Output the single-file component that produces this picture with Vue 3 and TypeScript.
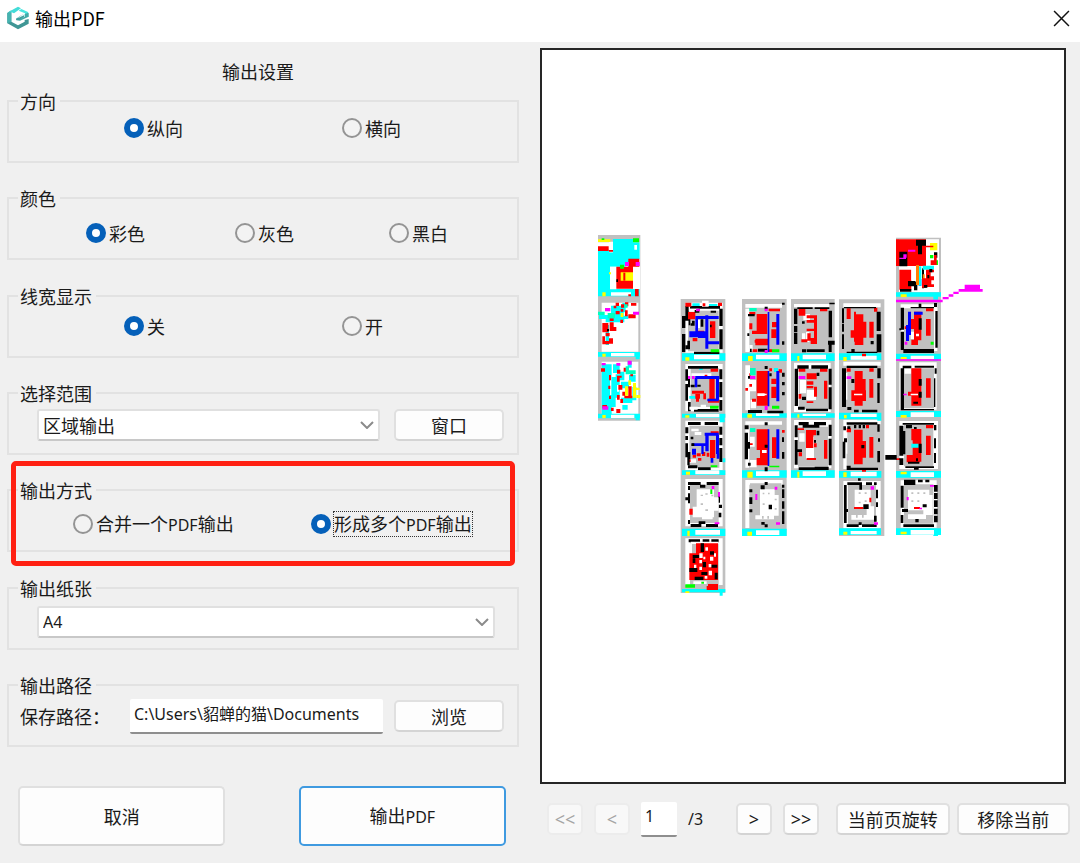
<script setup lang="ts">
import { ref } from 'vue'

type Layer = [color: string, boxes: string]
interface Sheet { x: number; y: number; layers: Layer[] }

const GREY = '#c0c0c0', WHITE = '#ffffff', CYAN = '#00ffff', RED = '#ff0000'
const BLACK = '#000000', BLUE = '#0000ff', YELLOW = '#ffff00', GREEN = '#00ff00'
const PINK = '#ff00ff', TEAL = '#00ffbf', ORANGE = '#ff7f00'

const orientation = ref('portrait')
const color = ref('color')
const lineWidth = ref('off')
const range = ref('area')
const mode = ref('multiple')
const paper = ref('A4')
const savePath = ref('C:\\Users\\貂蝉的猫\\Documents')
const page = ref('1')

// Boxes are "x y w h" in thirds of a unit, relative to the column's origin.
const toPath = (boxes: string): string =>
  boxes.split(',').map((b) => {
    const [x, y, w, h] = b.trim().split(' ').map(Number)
    return `M${x} ${y}h${w}v${h}h${-w}z`
  }).join('')

const sheets: Sheet[] = [
  { x: 590, y: 225, layers: [
    [GREY, '27 30 127 557'],
    [WHITE, '27 52 126 160, 38 233 110 147, 38 410 110 158'],
    [CYAN, '27 74 36 138, 72 42 60 82, 56 82 96 20, 63 98 46 27, 110 52 42 48, 27 192 125 22, 27 381 126 14, 27 566 126 14, 140 381 12 22, 140 566 12 20, 66 242 40 50, 30 270 52 12, 100 234 10 30, 90 270 28 12, 50 276 24 16, 38 418 30 148, 72 418 20 26, 80 448 12 70, 66 456 14 90, 92 440 14 26, 96 470 24 20, 96 518 34 16, 100 540 16 14, 116 408 12 20, 120 450 20 20, 130 486 12 40, 50 300 10 60'],
    [WHITE, '60 50 12 32, 63 125 19 68, 133 126 19 64, 66 202 60 10, 66 384 70 10, 66 569 70 10, 136 60 8 14, 63 450 4 60, 84 480 6 20, 104 262 5 10'],
    [RED, '27 64 32 14, 60 75 12 5, 118 101 33 24, 82 125 50 66, 138 192 11 22, 118 208 8 6, 80 233 10 10, 96 238 10 10, 108 232 10 12, 126 234 16 8, 74 242 8 8, 80 258 12 10, 95 252 8 8, 108 256 8 18, 118 268 22 12, 94 284 8 10, 62 280 12 8, 40 294 18 28, 62 292 12 26, 72 306 10 12, 50 324 12 10, 40 334 8 24, 60 340 12 16, 48 348 12 10, 36 430 12 10, 60 450 6 16, 84 434 10 12, 104 428 10 12, 84 458 8 12, 88 480 12 14, 100 500 10 12, 118 484 10 28, 106 512 24 8, 84 510 8 14, 94 522 8 12, 58 482 6 10, 60 512 6 10, 40 540 14 10, 66 548 8 10, 82 552 12 12, 124 446 8 8, 84 452 14 6'],
    [YELLOW, '27 43 37 8, 95 142 37 25, 60 142 6 6, 40 202 10 12, 95 264 8 12, 40 386 10 9, 40 570 10 9, 118 466 8 14, 108 484 9 28, 132 474 9 44, 140 488 12 7, 142 510 12 9'],
    [GREEN, '132 40 18 12, 93 119 12 12, 38 40 8 5'],
    [TEAL, '27 260 20 10, 56 264 22 16, 106 238 10 10, 110 424 10 24, 112 436 28 12'],
    [PINK, '108 111 12 12, 140 111 12 12, 48 249 16 10, 132 260 18 9, 116 407 12 12, 38 414 12 7, 82 414 12 8, 40 544 18 10'],
    [RED, '103 143 6 24'], [BLACK, '82 163 5 8, 54 312 6 7'],
  ] },
  { x: 675, y: 290, layers: [
    [GREY, '20 27 134 882'],
    [WHITE, '34 38 112 150, 34 222 112 142, 34 392 112 148, 34 567 112 142, 34 745 112 140'],
    [GREY, '42 62 92 122, 50 235 86 116, 46 407 90 126, 48 585 86 114, 48 755 86 130'],
    [CYAN, '24 190 130 22, 24 371 130 12, 24 541 130 14, 24 716 130 22, 24 897 130 10, 137 371 15 26, 137 897 9 20, 55 40 22 14, 105 42 25 12, 24 148 8 12, 76 228 10 12, 46 318 26 8, 146 505 8 12'],
    [BLACK, '34 48 10 44, 24 78 10 36, 24 132 10 54, 48 48 90 8, 136 56 10 52, 136 118 10 60, 60 185 76 7, 44 66 5 40, 42 228 90 8, 34 238 8 34, 34 282 8 50, 42 264 6 28, 42 336 8 28, 60 357 74 8, 136 238 9 30, 136 276 9 46, 136 330 9 32, 42 396 38 9, 92 396 40 9, 34 412 9 18, 34 438 8 12, 34 460 8 42, 42 486 7 22, 136 410 9 24, 136 444 9 22, 136 474 9 42, 42 526 28 9, 72 532 38 9, 42 576 38 9, 98 576 36 9, 78 584 16 9, 42 588 6 12, 42 610 6 30, 34 622 10 9, 42 690 6 12, 50 702 32 9, 96 702 36 9, 74 694 20 8, 132 610 6 28, 134 644 10 10, 134 668 8 14, 44 748 34 9, 86 748 20 9, 112 748 22 9, 100 640 10 18'],
    [WHITE, '46 56 28 9, 84 32 20 18, 64 90 14 24, 60 194 76 14, 66 372 70 10, 64 541 72 12, 64 720 74 14, 52 250 60 8, 46 350 25 9, 80 344 16 10, 62 426 20 9, 52 416 22 8, 46 508 20 10, 68 598 52 84, 56 650 28 32, 116 622 18 40, 84 674 32 14, 50 755 84 7, 46 760 8 82, 58 874 40 8'],
    [RED, '34 38 18 12, 42 66 22 22, 86 40 8 9, 108 94 16 50, 68 122 22 10, 56 144 14 10, 132 38 12 10, 110 236 22 9, 92 254 8 8, 106 266 16 66, 54 302 36 9, 64 312 14 14, 66 326 9 9, 88 310 8 18, 102 326 34 12, 110 424 24 10, 108 450 16 54, 56 495 10 8, 68 490 12 9, 84 486 10 12, 98 488 8 12, 72 504 10 8, 44 508 6 8, 46 656 10 18, 66 760 66 110, 46 790 22 80, 102 882 30 18, 98 888 6 12'],
    [BLUE, '94 76 9 100, 64 78 70 9, 64 84 8 50, 46 124 48 18, 102 154 34 9, 72 136 26 8, 64 258 72 9, 62 264 8 28, 126 264 9 66, 100 326 34 8, 92 428 42 9, 94 434 10 50, 54 460 44 8, 126 434 9 58, 54 476 12 18, 110 504 8 14, 82 466 7 26, 128 490 8 16'],
    [BLACK, '80 88 8 22, 54 92 8 12, 62 60 14 8, 40 152 8 14, 110 62 16 6, 108 104 5 8, 50 100 12 7, 34 166 14 12, 50 284 12 8, 70 284 10 6, 52 460 9 8, 40 500 7 26, 50 440 8 8, 80 760 10 26, 108 784 12 10, 56 795 20 9, 86 816 10 16, 112 824 18 9, 46 834 24 12, 82 846 18 9, 122 848 9 20, 62 860 26 10, 56 805 8 14'],
    [WHITE, '76 790 10 14, 94 772 8 10, 108 800 10 12, 76 810 8 10, 104 822 8 10, 76 830 8 10, 104 842 10 14, 60 824 7 10, 92 858 8 8, 120 790 6 10, 88 800 6 8'],
    [GREY, '94 610 7 4, 80 640 7 5, 80 614 7 4, 94 658 8 5, 112 614 6 5'],
    [GREEN, '110 178 26 9, 108 347 26 9, 110 526 20 6, 109 598 6 14, 34 883 29 10, 82 875 8 6'],
    [YELLOW, '34 202 12 10, 34 376 12 7, 36 545 12 9, 40 722 7 16, 34 904 12 5'],
    [PINK, '66 56 12 8, 42 258 7 9, 54 258 8 9, 113 588 8 10, 132 606 6 14, 122 697 14 6'],
  ] },
  { x: 735, y: 290, layers: [
    [GREY, '24 27 134 711, 171 27 131 536'],
    [WHITE, '34 42 110 11, 34 56 12 130, 34 226 14 135, 34 394 110 10, 34 405 12 128, 34 570 112 14, 34 580 12 134, 180 42 106 10, 180 218 110 148, 180 390 112 145'],
    [GREY, '48 62 94 116, 48 235 94 124, 48 405 94 132, 48 580 94 122, 192 58 92 122, 194 236 90 122, 192 410 90 120'],
    [CYAN, '24 190 134 23, 24 370 134 13, 24 541 134 22, 24 716 134 22, 171 190 131 23, 171 370 131 13, 171 541 131 22, 120 234 12 12'],
    [WHITE, '66 194 70 14, 66 370 70 8, 66 544 70 14, 66 721 70 14, 206 194 70 14, 206 371 70 7, 206 544 70 14, 46 165 10 18, 48 270 18 34, 50 330 16 25, 48 440 14 30, 48 510 20 22, 78 598 44 78, 100 615 34 62, 64 676 56 12, 208 72 20 18, 204 130 10 24, 216 126 10 30, 198 270 18 40, 218 300 28 30, 216 440 24 66, 196 430 16 25'],
    [RED, '68 72 32 60, 54 122 46 10, 46 66 18 8, 46 100 9 18, 104 56 34 8, 114 96 16 16, 112 118 16 26, 64 146 38 20, 62 150 16 8, 56 178 14 8, 104 178 10 8, 68 243 34 104, 112 266 16 16, 112 290 16 34, 34 294 8 8, 46 282 8 8, 54 326 12 9, 106 235 8 9, 134 238 10 10, 46 250 4 8, 68 418 34 62, 78 476 24 50, 114 442 14 62, 68 504 18 22, 48 460 8 5, 144 420 8 8, 194 55 20 22, 258 55 22 9, 218 76 26 9, 240 76 9 86, 218 90 22 8, 218 116 24 7, 220 130 10 22, 230 144 18 18, 202 148 18 9, 194 235 20 10, 258 235 22 10, 218 250 30 18, 218 274 20 10, 218 288 20 7, 240 290 9 30, 270 272 10 54, 194 312 8 14, 218 334 20 5, 190 415 20 5, 216 420 30 16, 216 436 22 38, 240 460 8 12, 270 450 10 56, 194 487 10 12, 218 504 28 6'],
    [BLUE, '101 66 5 120, 127 72 9 92, 101 243 5 106, 127 243 9 91, 101 418 5 110, 127 418 9 88'],
    [BLACK, '92 50 9 8, 144 38 8 6, 42 72 20 7, 144 154 7 10, 40 130 6 8, 48 176 5 10, 72 176 28 9, 92 228 9 9, 106 250 7 9, 144 248 8 12, 144 276 8 10, 144 306 8 10, 42 360 42 9, 100 362 48 8, 42 258 7 8, 92 397 9 9, 32 406 12 12, 32 428 10 80, 42 456 6 20, 92 464 9 9, 92 532 9 12, 42 518 8 9, 144 442 6 14, 144 486 7 20, 92 576 9 9, 80 586 12 12, 46 598 9 9, 46 622 9 20, 46 658 9 9, 104 644 10 14, 144 584 7 9, 144 598 7 26, 144 634 7 22, 144 664 7 38, 82 696 10 8, 92 703 9 9, 180 56 10 46, 180 108 10 18, 180 128 10 34, 190 52 46 5, 242 52 44 5, 284 62 10 80, 286 38 16 5, 282 152 20 12, 284 160 9 26, 204 178 12 9, 218 178 54 8, 190 226 34 10, 232 226 50 10, 182 236 10 112, 192 350 20 9, 216 356 66 8, 284 236 9 48, 284 292 9 66, 204 320 12 10, 248 248 8 10, 194 396 30 10, 240 396 36 10, 182 406 9 36, 182 450 9 74, 284 404 9 34, 284 446 9 80, 206 404 50 9, 194 532 48 8, 242 530 42 10, 190 478 14 8, 248 422 8 14, 204 94 8 7, 240 450 6 8'],
    [TEAL, '46 54 22 10, 48 234 17 22, 48 414 16 12'],
    [GREEN, '114 178 22 9, 114 347 22 9, 106 527 30 5'],
    [YELLOW, '42 198 14 15, 40 373 14 10, 40 545 16 18, 40 725 14 12, 190 198 6 15, 190 373 6 10, 190 545 6 18'],
    [PINK, '92 56 9 8, 92 180 9 9, 48 258 16 9, 92 348 9 12, 194 258 20 9, 64 612 6 18, 122 590 8 9, 126 697 12 7'],
    [WHITE, '70 310 22 8, 84 311 14 5, 84 480 14 9'],
    [GREY, '86 608 5 5, 102 608 5 5, 122 626 6 5, 86 640 6 5, 122 654 6 5, 84 678 5 8, 100 678 5 8'],
  ] },
  { x: 835, y: 225, layers: [
    [GREY, '15 223 136 710, 186 38 135 892'],
    [WHITE, '28 235 112 12, 28 410 112 12, 28 584 112 14, 28 598 12 134, 28 768 112 142, 195 43 120 158, 200 238 110 140, 196 412 112 142, 196 588 116 144, 200 766 108 142'],
    [GREY, '38 250 92 130, 38 430 92 122, 38 602 92 124, 42 780 84 118, 210 250 90 122, 210 430 90 120, 210 600 88 124, 210 778 88 118'],
    [CYAN, '15 385 127 20, 15 563 126 20, 15 738 127 20, 15 910 126 20, 130 563 12 24, 130 738 12 20, 186 202 135 13, 186 386 135 16, 186 558 135 18, 186 738 135 20, 186 910 135 20, 298 202 14 22, 298 386 14 21, 298 910 14 23'],
    [WHITE, '50 392 78 12, 50 566 78 10, 50 740 78 14, 50 918 78 10, 230 392 70 10, 230 562 70 14, 230 742 70 14, 230 915 70 14, 30 444 10 80, 30 600 10 86, 62 794 48 56, 52 870 68 14, 98 844 22 32, 222 794 64 62, 268 810 28 60, 222 868 54 14, 230 320 28 22, 302 250 8 20, 304 690 8 40, 212 430 20 16'],
    [RED, '186 43 90 80, 196 134 36 60, 38 250 12 32, 120 248 10 12, 60 260 6 90, 66 268 22 92, 50 316 46 22, 88 290 9 48, 106 290 13 48, 62 340 14 20, 84 386 12 8, 38 430 12 10, 106 430 13 10, 62 438 24 104, 52 496 44 32, 86 462 9 60, 106 462 12 56, 60 614 26 104, 38 610 13 12, 60 648 36 50, 96 600 9 10, 106 636 12 62, 84 734 12 6, 60 846 28 6, 106 818 6 14, 276 250 22 9, 240 260 22 86, 230 282 10 30, 276 282 14 50, 232 344 20 16, 212 304 10 8, 232 430 30 112, 276 460 14 58, 222 500 26 12, 276 600 22 10, 232 612 30 34, 236 640 26 70, 218 690 40 22, 276 632 14 58, 186 700 12 5, 240 846 18 6'],
    [BLACK, '24 250 6 44, 24 296 6 24, 24 328 6 44, 30 246 96 4, 128 260 12 58, 128 328 14 54, 38 380 92 4, 52 372 10 10, 110 348 9 10, 24 430 12 116, 38 422 92 7, 130 430 10 30, 130 474 7 60, 40 546 12 9, 84 554 46 8, 60 554 14 8, 38 592 92 7, 130 598 7 22, 132 640 6 10, 130 678 8 34, 26 650 8 50, 30 640 9 12, 28 604 8 12, 40 604 9 8, 60 600 7 10, 74 600 7 10, 86 600 7 10, 52 462 9 12, 82 660 9 10, 38 728 94 7, 38 722 12 7, 72 760 8 7, 40 772 44 8, 76 780 8 14, 96 772 18 8, 120 772 8 8, 30 780 8 114, 34 852 8 9, 38 898 36 8, 84 898 44 8, 74 892 9 8, 126 794 6 26, 126 832 6 14, 120 872 8 18, 88 838 16 14, 154 690 34 14, 196 80 24 44, 246 44 30 18, 252 60 12 28, 290 54 10 10, 300 82 10 16, 198 192 34 8, 222 168 22 16, 240 170 10 26, 264 130 6 60, 200 248 10 66, 200 320 10 56, 254 236 8 14, 230 246 70 4, 300 234 9 12, 304 258 7 110, 208 372 92 12, 196 310 6 6, 200 430 10 126, 206 422 26 8, 242 422 58 6, 210 552 90 4, 302 430 6 16, 300 460 4 86, 196 602 12 90, 196 700 12 20, 208 618 6 70, 216 600 18 10, 240 606 8 6, 206 594 94 5, 300 600 7 16, 300 640 6 30, 300 684 6 30, 214 724 86 5, 222 710 34 6, 240 724 14 10, 210 764 34 16, 252 764 14 8, 274 764 12 8, 200 782 9 66, 204 852 18 9, 200 870 8 24, 208 898 92 8, 244 882 10 10, 300 780 11 112, 266 838 12 9'],
    [WHITE, '300 800 11 4, 300 822 11 4, 300 846 11 5, 300 868 11 4'],
    [BLUE, '222 260 9 70, 216 300 9 48, 240 260 26 9, 254 162 8 20'],
    [CYAN, '254 124 8 58, 266 122 34 12, 232 656 22 12'],
    [ORANGE, '246 120 9 60, 266 148 6 34'],
    [RED, '276 134 24 52, 264 160 14 28'],
    [WHITE, '232 130 14 36, 290 142 10 12, 292 166 10 12, 232 322 8 8, 246 326 9 8, 60 506 25 5, 230 506 22 5'],
    [GREY, '74 802 6 5, 92 802 6 5, 74 830 6 5, 92 826 6 5, 232 802 6 5, 250 802 6 5, 268 802 6 5, 232 826 6 5, 250 826 6 5, 66 870 5 8, 84 870 5 8'],
    [BLACK, '254 280 9 34, 254 462 9 20, 254 500 9 18, 238 530 14 6, 254 656 9 28, 246 700 6 9, 286 132 9 10, 280 150 6 10, 270 180 10 8'],
    [YELLOW, '288 54 22 22, 200 208 18 8, 28 396 10 12, 200 396 18 6, 30 570 8 10, 200 570 18 8, 28 742 10 14, 200 740 18 8, 28 920 12 9, 200 920 18 8'],
    [GREEN, '288 90 10 10, 304 106 8 14, 290 350 9 9'],
    [RED, '300 90 8 30, 290 106 10 14, 276 62 22 5'],
    [PINK, '186 224 140 8, 326 216 18 7, 344 208 14 7, 358 200 16 7, 374 192 72 8, 392 179 46 14, 186 403 135 4, 222 74 22 6, 208 88 10 10, 196 98 20 4, 38 454 14 8, 110 784 10 10, 120 892 12 7, 212 350 8 9, 208 506 10 5, 218 816 6 10, 256 848 8 5, 288 780 12 5'],
  ] },
]
</script>

<template>
  <div class="dialog">
    <header class="titlebar">
      <svg class="logo" viewBox="0 0 66 70" aria-hidden="true">
        <path d="M1 20 13 12V46L33 57 53 46V41L65 38V52L33 69 1 51Z" fill="#3f9695" />
        <path d="M1 20 13 13V46L1 51Z" fill="#46b3b0" />
        <path d="M3 18 33 1 42 6 21 21 14 18Z" fill="#42dcd8" />
        <path d="M43 8 63 17 64 32 54 32V21L35 13Z" fill="#48e6e0" />
        <path d="M27 37 44 26 65 19V31L39 43 28 42Z" fill="#43aaa8" />
        <path d="M44 26 53 21V31L38 38 32 36Z" fill="#efffff" />
        <path d="M27 38 51 27V32L37 41 29 41Z" fill="#3f9f9e" />
      </svg>
      <h1>输出PDF</h1>
      <button class="close" type="button" aria-label="关闭">
        <svg viewBox="0 0 16 16" aria-hidden="true"><path d="M1 1 15 15M15 1 1 15" /></svg>
      </button>
    </header>

    <main class="body">
      <form class="settings" @submit.prevent>
        <h2>输出设置</h2>
        <div class="groups">
          <fieldset>
            <legend>方向</legend>
            <div class="row two high">
              <label><input v-model="orientation" type="radio" name="orientation" value="portrait" />纵向</label>
              <label><input v-model="orientation" type="radio" name="orientation" value="landscape" />横向</label>
            </div>
          </fieldset>
          <fieldset>
            <legend>颜色</legend>
            <div class="row three low">
              <label><input v-model="color" type="radio" name="color" value="color" />彩色</label>
              <label><input v-model="color" type="radio" name="color" value="grey" />灰色</label>
              <label><input v-model="color" type="radio" name="color" value="mono" />黑白</label>
            </div>
          </fieldset>
          <fieldset>
            <legend>线宽显示</legend>
            <div class="row two">
              <label><input v-model="lineWidth" type="radio" name="width" value="off" />关</label>
              <label><input v-model="lineWidth" type="radio" name="width" value="on" />开</label>
            </div>
          </fieldset>
          <fieldset>
            <legend>选择范围</legend>
            <div class="fields">
              <span class="select">
                <select v-model="range" aria-label="选择范围"><option value="area">区域输出</option></select>
                <svg viewBox="0 0 14 8" aria-hidden="true"><path d="M1 1 7 7 13 1" /></svg>
              </span>
              <button class="side" type="button">窗口</button>
            </div>
          </fieldset>
          <div class="marked">
            <fieldset>
              <legend>输出方式</legend>
              <div class="row modes">
                <label><input v-model="mode" type="radio" name="mode" value="single" /><span>合并一个<span class="abbr">PDF</span>输出</span></label>
                <label><input v-model="mode" type="radio" name="mode" value="multiple" /><span class="focus">形成多个<span class="abbr">PDF</span>输出</span></label>
              </div>
            </fieldset>
          </div>
          <fieldset>
            <legend>输出纸张</legend>
            <div class="fields paper">
              <span class="select latin">
                <select v-model="paper" aria-label="输出纸张"><option>A4</option></select>
                <svg viewBox="0 0 14 8" aria-hidden="true"><path d="M1 1 7 7 13 1" /></svg>
              </span>
            </div>
          </fieldset>
          <fieldset>
            <legend>输出路径</legend>
            <div class="fields path">
              <label for="save-path">保存路径：</label>
              <input id="save-path" v-model="savePath" type="text" />
              <button class="side" type="button">浏览</button>
            </div>
          </fieldset>
        </div>
        <div class="actions">
          <button type="button">取消</button>
          <button class="primary" type="submit">输出<span class="abbr">PDF</span></button>
        </div>
      </form>

      <section class="preview">
        <div class="canvas">
          <svg viewBox="543 50 522 732" role="img" aria-label="图纸预览">
            <g v-for="s in sheets" :key="s.x" :transform="`translate(${s.x} ${s.y}) scale(${1 / 3})`">
              <path v-for="([fill, boxes], i) in s.layers" :key="i" :fill="fill" :d="toPath(boxes)" />
            </g>
          </svg>
        </div>
        <nav class="pager" aria-label="翻页">
          <button class="step" type="button" disabled>&lt;&lt;</button>
          <button class="step" type="button" disabled>&lt;</button>
          <input v-model="page" type="text" aria-label="页码" />
          <span class="total">/3</span>
          <button class="step" type="button">&gt;</button>
          <button class="step" type="button">&gt;&gt;</button>
          <button class="wide first" type="button">当前页旋转</button>
          <button class="wide" type="button">移除当前</button>
        </nav>
      </section>
    </main>
  </div>
</template>

<style>
body { margin: 0; background: #f0f0f0; }
</style>

<style scoped>
.dialog {
  display: flex;
  flex-direction: column;
  min-height: 100vh;
  color: #1a1a1a;
  font: 18px/24px "Noto Sans CJK SC", sans-serif;
}
.dialog *, .dialog { box-sizing: border-box; }
button, input, select { font: inherit; color: inherit; margin: 0; }
h1, h2 { margin: 0; font-size: 18px; font-weight: 400; }
.abbr { font-family: "Noto Sans", sans-serif; font-size: 16px; }

.titlebar {
  display: flex;
  align-items: center;
  height: 42px;
  padding: 0 10px 6px 7px;
  background: #fff;
}
.titlebar h1 { flex: 1; padding-left: 6px; color: #000; }
.logo { width: 22px; height: 24px; }
.close { display: flex; padding: 0; border: 0; background: none; }
.close svg { width: 17px; height: 17px; fill: none; stroke: #111; stroke-width: 1.4; }

.body {
  flex: 1;
  display: grid;
  grid-template-columns: minmax(0, 512fr) minmax(0, 530fr);
  column-gap: 21px;
  padding: 6px 10px 17px 7px;
  background: #f0f0f0;
}
.settings { display: flex; flex-direction: column; }
.settings h2 { padding: 11px 10px 0 0; text-align: center; }
.groups { flex: 1; display: flex; flex-direction: column; justify-content: space-between; padding-top: 6px; }
fieldset {
  height: 74px;
  margin: 0;
  padding: 0;
  border: 2px solid #e2e2e2;
}
legend { margin-left: 9px; padding: 0 4px 0 2px; }
.row { display: grid; padding-top: 6px; }
.row.high { padding-top: 3px; }
.row.low { padding-top: 11px; }
.row label { display: flex; align-items: center; gap: 3px; white-space: nowrap; }
.row label:first-child { grid-column: 2; }
.two { grid-template-columns: 115fr 218fr 175fr; }
.three { grid-template-columns: 77fr 149fr 154fr 128fr; }
.modes { grid-template-columns: 64fr 238fr 206fr; padding-top: 9px; }

input[type="radio"] {
  appearance: none;
  flex: none;
  width: 20px;
  height: 20px;
  border: 2px solid #949494;
  border-radius: 50%;
  background: #f3f3f3;
}
input[type="radio"]:checked { border: 6px solid #0560b9; background: #fff; }
.focus { outline: 1px dotted #333; line-height: 22px; }

.marked { position: relative; }
.marked::after {
  content: "";
  position: absolute;
  inset: -17px 4px -14px 4px;
  border: 5px solid #ff2012;
  border-radius: 5px;
  pointer-events: none;
}

button {
  border: 2px solid #e0e0e0;
  border-bottom-color: #d4d4d4;
  border-radius: 5px;
  background: #fdfdfd;
  padding: 0;
}
.fields { display: flex; align-items: center; gap: 14px; padding: 4px 13px 0 28px; }
.fields.paper { padding: 6px 22px 0 28px; }
.fields.path { padding: 2px 13px 0 11px; gap: 11px; }
.fields.path label { flex: 0 0 99px; }
.side { flex: 0 0 110px; height: 32px; }
.select { position: relative; flex: 1; display: flex; }
.select select {
  appearance: none;
  flex: 1;
  height: 32px;
  padding: 0 30px 0 4px;
  border: 2px solid #e0e0e0;
  border-bottom-color: #c8c8c8;
  border-radius: 3px;
  background: #fff;
}
.select svg {
  position: absolute;
  right: 6px;
  top: 12px;
  width: 14px;
  height: 8px;
  fill: none;
  stroke: #8b8b8b;
  stroke-width: 2;
  pointer-events: none;
}
input[type="text"] {
  min-width: 0;
  height: 35px;
  padding: 0 4px 4px;
  border: 0;
  border-bottom: 2px solid #8e8e8e;
  border-radius: 2px;
  background: #fff;
  font-family: "Noto Sans", "Noto Sans CJK SC", sans-serif;
  font-size: 16px;
}
.latin select { font-family: "Noto Sans", sans-serif; font-size: 16px; }
.fields.path input { flex: 1; }

.actions { display: flex; justify-content: space-between; padding: 39px 13px 0 11px; }
.actions button { flex: 0 0 42.5%; height: 60px; }
.actions .primary { border-color: #3f9ae0; }

.preview { display: flex; flex-direction: column; min-width: 0; }
.canvas {
  flex: 1;
  display: flex;
  min-height: 0;
  margin-right: 4px;
  border: 2px solid #262626;
  background: #fff;
}
.canvas svg { width: 100%; height: 100%; }
.pager {
  display: flex;
  align-items: center;
  gap: 11px;
  height: 36px;
  margin-top: 17px;
  padding-left: 7px;
  margin-bottom: 9px;
  font-family: "Noto Sans", sans-serif;
}
.step { flex: 0 0 36px; height: 32px; }
.step:disabled { color: #a5a5a5; border-color: #ececec; background: #f8f8f8; }
.pager input { flex: 0 0 36px; }
.total { flex: 0 0 37px; font-size: 16px; }
.wide { flex: 1 1 0; height: 32px; font-family: "Noto Sans CJK SC", sans-serif; white-space: nowrap; }
.wide.first { margin-left: 6px; }
.wide + .wide { margin-left: -4px; }
</style>
